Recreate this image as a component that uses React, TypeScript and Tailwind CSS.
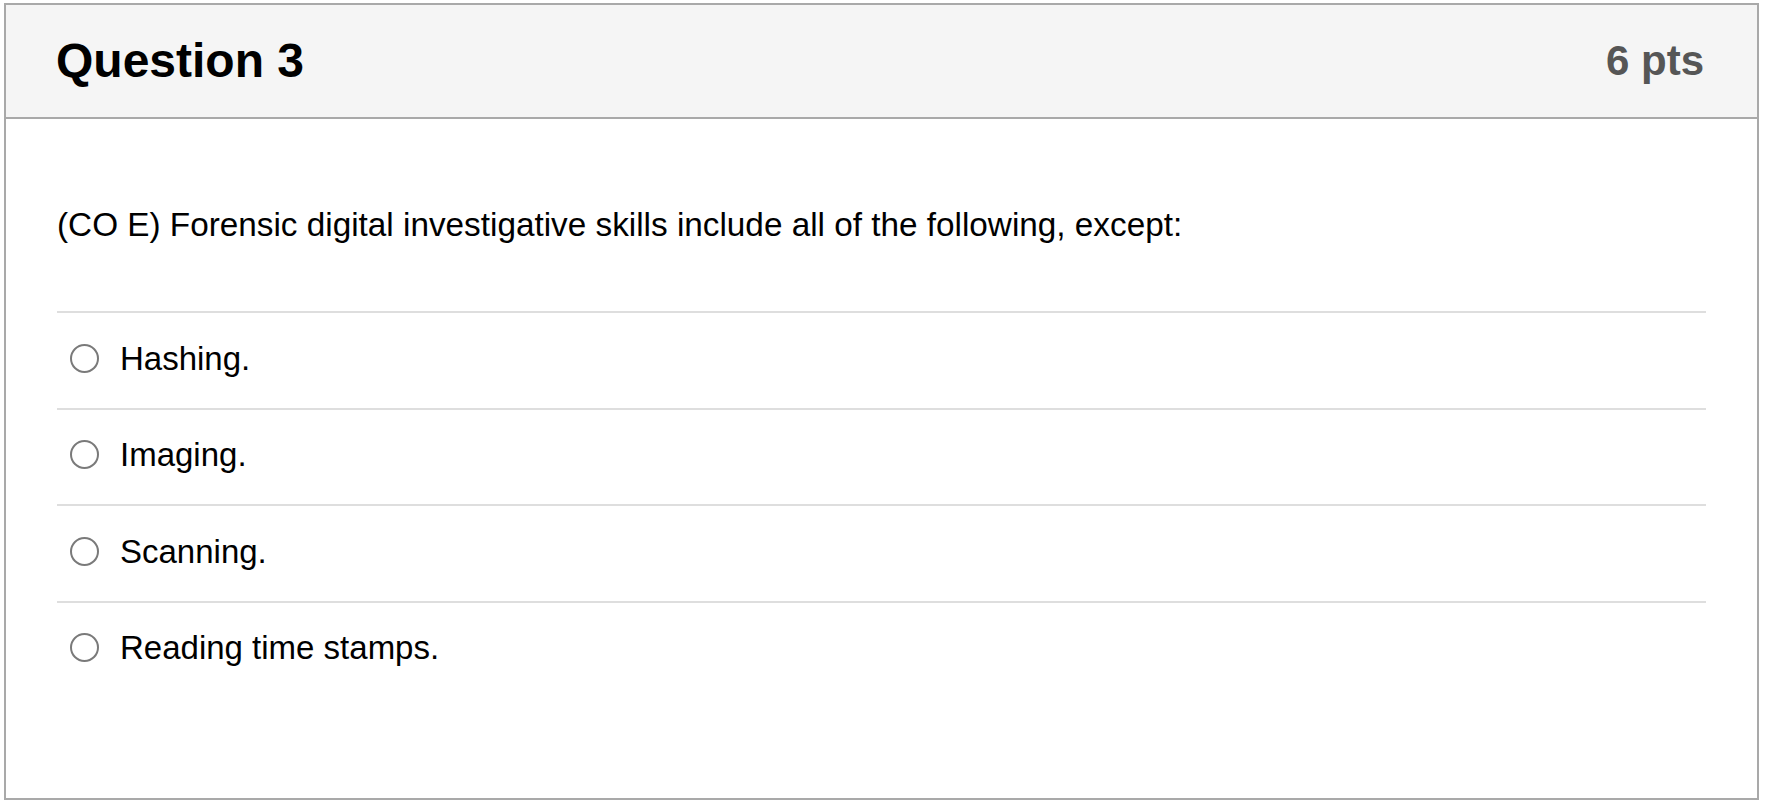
import React from "react";

const options = ["Hashing.", "Imaging.", "Scanning.", "Reading time stamps."];

export default function App() {
  return (
    <div className="min-h-[811px] w-[1777px] bg-white pl-[4px] pt-[3px]" style={{ fontFamily: '"Liberation Sans", Arial, sans-serif' }}>
      <div className="flex h-[797px] w-[1755px] flex-col border-2 border-[#a9a9a9] bg-white">
        <div className="flex h-[114px] shrink-0 items-center justify-between border-b-2 border-[#a9a9a9] bg-[#f5f5f5] pl-[50px] pr-[53px]">
          <h2 className="text-[48px] font-bold leading-none text-black">Question 3</h2>
          <div className="text-[42px] font-bold leading-none text-[#565656]">6 pts</div>
        </div>
        <div className="px-[51px] pt-[81px]">
          <p className="text-[33.3px] leading-[50px] text-black">
            (CO E) Forensic digital investigative skills include all of the following, except:
          </p>
          <div className="mt-[61px]">
            {options.map((o) => (
              <div key={o} className="flex h-[96.5px] items-center border-t-2 border-[#dedede] pb-[4px] pl-[13px]">
                <span className="mr-[21px] h-[29px] w-[29px] shrink-0 rounded-full border-2 border-[#7a7a7a] bg-white" />
                <span className="text-[33px] leading-none text-black">{o}</span>
              </div>
            ))}
          </div>
        </div>
      </div>
    </div>
  );
}
